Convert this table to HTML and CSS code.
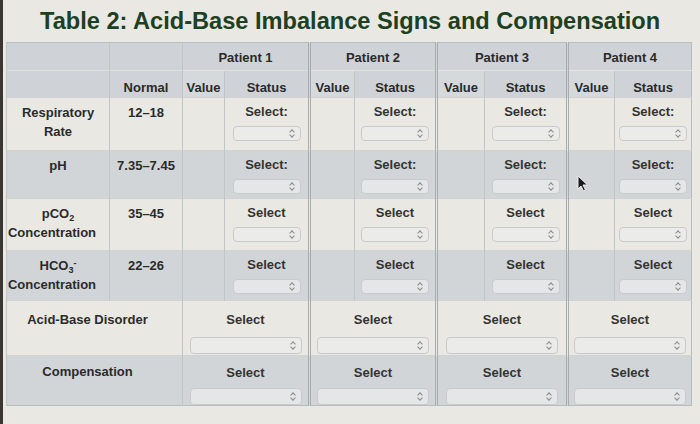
FILE: index.html
```html
<!DOCTYPE html>
<html>
<head>
<meta charset="utf-8">
<link rel="stylesheet" href="styles.css">
</head>
<body>
<h1 class="title">Table 2: Acid-Base Imbalance Signs and Compensation</h1>
<table class="grid">
  <colgroup>
    <col class="c-label"><col class="c-normal">
    <col class="c-v1"><col class="c-s1">
    <col class="c-v2"><col class="c-s2">
    <col class="c-v3"><col class="c-s3">
    <col class="c-v4"><col class="c-s4">
  </colgroup>
  <tr class="h1">
    <th></th><th></th>
    <th colspan="2" class="pend">Patient 1</th>
    <th colspan="2" class="pend">Patient 2</th>
    <th colspan="2" class="pend">Patient 3</th>
    <th colspan="2">Patient 4</th>
  </tr>
  <tr class="h2">
    <th></th><th>Normal</th>
    <th class="val">Value</th><th class="pend">Status</th>
    <th class="val">Value</th><th class="pend">Status</th>
    <th class="val">Value</th><th class="pend">Status</th>
    <th class="val">Value</th><th>Status</th>
  </tr>
  <tr class="r light r-resp">
    <td class="lbl">Respiratory<br>Rate</td><td class="nrm">12–18</td>
    <td></td><td class="pend"><div class="st">Select:</div><div class="sel"><i class="chev"></i></div></td>
    <td></td><td class="pend"><div class="st">Select:</div><div class="sel"><i class="chev"></i></div></td>
    <td></td><td class="pend"><div class="st">Select:</div><div class="sel"><i class="chev"></i></div></td>
    <td></td><td><div class="st">Select:</div><div class="sel"><i class="chev"></i></div></td>
  </tr>
  <tr class="r dark r-ph">
    <td class="lbl">pH</td><td class="nrm">7.35–7.45</td>
    <td></td><td class="pend"><div class="st">Select:</div><div class="sel"><i class="chev"></i></div></td>
    <td></td><td class="pend"><div class="st">Select:</div><div class="sel"><i class="chev"></i></div></td>
    <td></td><td class="pend"><div class="st">Select:</div><div class="sel"><i class="chev"></i></div></td>
    <td class="cur-cell"><svg class="cursor" width="12" height="17" viewBox="0 0 12 17"><path d="M1 1 L1 14 L4 11 L6.5 16 L8.5 15 L6 10 L10.5 10 Z" fill="#1a1a1a" stroke="#eee" stroke-width="1"/></svg></td>
    <td><div class="st">Select:</div><div class="sel"><i class="chev"></i></div></td>
  </tr>
  <tr class="r light r-pco">
    <td class="lbl">pCO<sub>2</sub><br><span class="wide">Concentration</span></td><td class="nrm">35–45</td>
    <td></td><td class="pend"><div class="st">Select</div><div class="sel"><i class="chev"></i></div></td>
    <td></td><td class="pend"><div class="st">Select</div><div class="sel"><i class="chev"></i></div></td>
    <td></td><td class="pend"><div class="st">Select</div><div class="sel"><i class="chev"></i></div></td>
    <td></td><td><div class="st">Select</div><div class="sel"><i class="chev"></i></div></td>
  </tr>
  <tr class="r dark r-hco">
    <td class="lbl">HCO<sub>3</sub><sup>-</sup><br><span class="wide">Concentration</span></td><td class="nrm">22–26</td>
    <td></td><td class="pend"><div class="st">Select</div><div class="sel"><i class="chev"></i></div></td>
    <td></td><td class="pend"><div class="st">Select</div><div class="sel"><i class="chev"></i></div></td>
    <td></td><td class="pend"><div class="st">Select</div><div class="sel"><i class="chev"></i></div></td>
    <td></td><td><div class="st">Select</div><div class="sel"><i class="chev"></i></div></td>
  </tr>
  <tr class="r light r-abd">
    <td colspan="2" class="lbl2">Acid-Base Disorder</td>
    <td colspan="2" class="pend"><div class="st">Select</div><div class="sel wide-sel"><i class="chev"></i></div></td>
    <td colspan="2" class="pend"><div class="st">Select</div><div class="sel wide-sel"><i class="chev"></i></div></td>
    <td colspan="2" class="pend"><div class="st">Select</div><div class="sel wide-sel"><i class="chev"></i></div></td>
    <td colspan="2"><div class="st">Select</div><div class="sel wide-sel"><i class="chev"></i></div></td>
  </tr>
  <tr class="r dark r-comp">
    <td colspan="2" class="lbl2">Compensation</td>
    <td colspan="2" class="pend"><div class="st">Select</div><div class="sel wide-sel"><i class="chev"></i></div></td>
    <td colspan="2" class="pend"><div class="st">Select</div><div class="sel wide-sel"><i class="chev"></i></div></td>
    <td colspan="2" class="pend"><div class="st">Select</div><div class="sel wide-sel"><i class="chev"></i></div></td>
    <td colspan="2"><div class="st">Select</div><div class="sel wide-sel"><i class="chev"></i></div></td>
  </tr>
</table>
</body>
</html>
```

FILE: styles.css
```css
html, body {
  margin: 0;
  padding: 0;
  background: #e9e8e3;
}
body {
  width: 700px;
  height: 424px;
  overflow: hidden;
  font-family: "Liberation Sans", Arial, sans-serif;
  color: #2b2b2b;
  border-left: 3px solid #3a3632;
  box-sizing: border-box;
}
.title {
  margin: 0;
  padding: 7px 0 0 37px;
  height: 35px;
  box-sizing: border-box;
  font-size: 23.6px;
  font-weight: bold;
  color: #1d3f22;
  line-height: 28px;
}
.grid {
  margin: 7px 0 0 3px;
  width: 685px;
  table-layout: fixed;
  border-collapse: collapse;
  border: 1px solid #b9bcbd;
  font-size: 13px;
  font-weight: bold;
}
.c-label { width: 103px; }
.c-normal { width: 73px; }
.c-v1 { width: 42px; }
.c-s1 { width: 85px; }
.c-v2 { width: 45px; }
.c-s2 { width: 82px; }
.c-v3 { width: 48px; }
.c-s3 { width: 83px; }
.c-v4 { width: 47px; }
.c-s4 { width: 77px; }

th, td {
  padding: 0;
  text-align: center;
  vertical-align: top;
  border-left: 1px solid #c2c5c6;
}
.pend { border-right: 3px double #a9adaf; }

.h1 { height: 28px; background: #cfd3d7; }
.h1 th { vertical-align: middle; padding-top: 2px; font-weight: bold; color: #2a2a2a; }
.h2 { height: 27px; background: #cfd3d7; border-top: 1px solid #dfe1e1; }
.h2 th { vertical-align: middle; font-weight: bold; color: #2a2a2a; padding-top: 6px; }
.h2 .val { background: #d6d9dc; border-top: 1px solid #e3e4e3; }

.r { border-top: 1px solid #d2d3d0; }
.light { background: #e9e8e3; }
.dark { background: #d1d5d8; }

.r-resp { height: 53px; }
.r-ph { height: 48px; }
.r-pco { height: 52px; }
.r-hco { height: 50px; }
.r-abd { height: 55px; }
.r-comp { height: 50px; }

.lbl { padding-top: 5px; line-height: 19px; }
.nrm { padding-top: 5px; line-height: 19px; }
.wide { margin-left: -12px; }
.lbl2 { padding-top: 11px; padding-right: 14px; }
.r-comp .lbl2 { padding-top: 8px; }
.lbl sub, .lbl sup { font-size: 9px; line-height: 0; }
.lbl sub { vertical-align: -3px; }
.lbl sup { vertical-align: 4px; }

.st { padding-top: 6px; line-height: 16px; color: #333; }
.sel {
  position: relative;
  margin: 6px auto 0;
  width: 68px;
  height: 15px;
  border: 1px solid #c9cacb;
  border-radius: 4px;
  background: #ebebe9;
  box-sizing: border-box;
}
.dark .sel { background: #e4e6e7; }
.wide-sel { width: 112px; height: 17px; margin-top: 9px; }
.r-abd .st { padding-top: 11px; }
.r-comp .st { padding-top: 9px; }
.r-comp .wide-sel { margin-top: 7px; }
.chev {
  position: absolute;
  right: 5px;
  top: 2px;
  width: 6px;
  height: 9px;
  display: block;
}
.chev::before, .chev::after {
  content: "";
  position: absolute;
  left: 1px;
  width: 3px;
  height: 3px;
  border-left: 1px solid #8a8a8a;
  border-top: 1px solid #8a8a8a;
}
.chev::before { top: 1px; transform: rotate(45deg); }
.chev::after { top: 4px; transform: rotate(-135deg); }
.wide-sel .chev { top: 3px; }

.cur-cell { position: relative; }
.cursor { position: absolute; left: 8px; top: 24px; }
```
